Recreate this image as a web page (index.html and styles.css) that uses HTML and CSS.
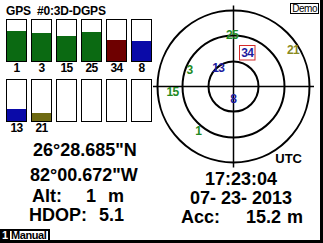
FILE: index.html
```html
<!DOCTYPE html>
<html>
<head>
<meta charset="utf-8">
<link rel="stylesheet" href="styles.css">
</head>
<body>
<div class="screen">
  <div class="left">
    <div class="title">GPS&nbsp;&nbsp;#0:3D-DGPS</div>
    <div class="bars">
      <div class="sat"><div class="bar"><div class="fill green" style="height:30px"></div></div><div class="lbl">1</div></div>
      <div class="sat"><div class="bar"><div class="fill green" style="height:28px"></div></div><div class="lbl">3</div></div>
      <div class="sat"><div class="bar"><div class="fill green" style="height:25px"></div></div><div class="lbl">15</div></div>
      <div class="sat"><div class="bar"><div class="fill green" style="height:29px"></div></div><div class="lbl">25</div></div>
      <div class="sat"><div class="bar"><div class="fill red" style="height:21px"></div></div><div class="lbl">34</div></div>
      <div class="sat"><div class="bar"><div class="fill blue" style="height:20px"></div></div><div class="lbl">8</div></div>
      <div class="sat"><div class="bar"><div class="fill blue" style="height:12px"></div></div><div class="lbl">13</div></div>
      <div class="sat"><div class="bar"><div class="fill olive" style="height:8px"></div></div><div class="lbl">21</div></div>
      <div class="sat"><div class="bar"></div><div class="lbl"></div></div>
      <div class="sat"><div class="bar"></div><div class="lbl"></div></div>
      <div class="sat"><div class="bar"></div><div class="lbl"></div></div>
      <div class="sat"><div class="bar"></div><div class="lbl"></div></div>
    </div>
    <div class="pos">
      <div class="lat">26°28.685"N</div>
      <div class="lon">82°00.672"W</div>
      <div class="alt"><span class="k-alt">Alt:</span><span>1</span><span class="u-alt">m</span></div>
      <div class="hdop"><span class="k-hdop">HDOP:</span><span>5.1</span></div>
    </div>
  </div>
  <div class="right">
    <svg class="radar" viewBox="0 0 167 151" width="167" height="151">
      <g fill="none" stroke="#000" stroke-width="2">
        <circle cx="80.5" cy="86.5" r="25"/>
        <circle cx="80.5" cy="86.5" r="51"/>
        <circle cx="80.5" cy="86.5" r="76"/>
      </g>
      <g stroke="#000" stroke-width="1.5">
        <line x1="0" y1="86.5" x2="161" y2="86.5"/>
        <line x1="80.5" y1="5.5" x2="80.5" y2="167.5"/>
      </g>
      <rect x="86.5" y="45.5" width="15.5" height="14.5" fill="#fff" stroke="#d42a2a" stroke-width="1"/>
      <g class="sv" text-anchor="middle">
        <text x="79" y="39" class="sv-g">25</text>
        <text x="94.3" y="57" class="sv-b">34</text>
        <text x="140" y="54" class="sv-o">21</text>
        <text x="36.5" y="74" class="sv-g">3</text>
        <text x="65.3" y="71.7" class="sv-b">13</text>
        <text x="19.5" y="95.7" class="sv-g">15</text>
        <text x="80.3" y="103.3" class="sv-b">8</text>
        <text x="45.3" y="135" class="sv-g">1</text>
      </g>
    </svg>
    <div class="utc">UTC</div>
    <div class="time">17:23:04</div>
    <div class="date">07- 23- 2013</div>
    <div class="acc"><span>Acc:</span><span class="acc-v">15.2</span><span class="acc-u">m</span></div>
  </div>
  <div class="footer"><div class="tab"><span class="num">1</span><span class="mode">Manual</span></div></div>
  <div class="demo">Demo</div>
</div>
</body>
</html>
```
FILE: styles.css
```css
html, body {
  margin: 0;
  padding: 0;
  background: #fff;
}
.screen {
  position: relative;
  width: 323px;
  height: 243px;
  box-sizing: border-box;
  border-right: 3px solid #000;
  border-bottom: 3px solid #000;
  background: #fff;
  display: grid;
  grid-template-columns: 153px 167px;
  grid-template-rows: 229px 11px;
  font-family: "Liberation Sans", Arial, sans-serif;
  color: #000;
  overflow: hidden;
}
.left {
  display: flex;
  flex-direction: column;
}
.title {
  padding: 5px 0 0 6px;
  height: 13px;
  line-height: 13px;
  font-family: "Liberation Sans Narrow", "Liberation Sans", sans-serif;
  font-weight: bold;
  font-size: 12px;
  letter-spacing: -0.2px;
  white-space: nowrap;
}
.bars {
  margin-top: 1px;
  padding-left: 6px;
  display: grid;
  grid-template-columns: repeat(6, 21px);
  column-gap: 4px;
}
.bar {
  height: 43px;
  box-sizing: border-box;
  border: 1px solid #000;
  display: flex;
  flex-direction: column;
  justify-content: flex-end;
}
.fill.green { background: #0b6a12; }
.fill.red { background: #6e0000; }
.fill.blue { background: #0a0aa8; }
.fill.olive { background: #6e6a12; }
.lbl {
  height: 17px;
  line-height: 12px;
  text-align: center;
  font-family: "Liberation Sans Narrow", "Liberation Sans", sans-serif;
  font-weight: bold;
  font-size: 12px;
  letter-spacing: -0.6px;
}
.pos {
  margin-top: 2px;
  font-weight: bold;
  font-size: 18px;
  line-height: 19px;
  white-space: nowrap;
}
.lat { padding-left: 33px; }
.lon { padding-left: 30px; margin-top: 6px; }
.alt { display: flex; padding-left: 32px; margin-top: 2px; }
.k-alt { width: 54px; }
.u-alt { margin-left: 12px; }
.hdop { display: flex; padding-left: 29px; }
.k-hdop { width: 70px; }
.right {
  display: flex;
  flex-direction: column;
}
.radar {
  display: block;
  overflow: visible;
}
.sv {
  font-family: "Liberation Sans Narrow", "Liberation Sans", sans-serif;
  font-weight: bold;
  font-size: 12px;
  letter-spacing: -0.6px;
}
.sv-g { fill: #238a23; }
.sv-b { fill: #1c1ca0; }
.sv-o { fill: #8a8a1e; }
.utc {
  font-weight: bold;
  font-size: 13px;
  line-height: 16px;
  text-align: right;
  padding-right: 18px;
}
.time, .date, .acc {
  font-weight: bold;
  font-size: 18px;
  line-height: 19px;
  white-space: pre;
}
.time { margin-top: 3px; text-align: center; padding-left: 9px; }
.date { text-align: center; padding-left: 9px; }
.acc { display: flex; padding-left: 28px; }
.acc-v { margin-left: 26px; }
.acc-u { margin-left: 6px; }
.footer {
  grid-column: 1 / -1;
  display: flex;
}
.tab {
  display: flex;
  background: #000;
  height: 11px;
  box-sizing: border-box;
  padding: 2px 2px 0 2px;
}
.num {
  color: #fff;
  width: 8px;
  font-family: "Liberation Sans Narrow", "Liberation Sans", sans-serif;
  font-weight: bold;
  font-size: 11px;
  line-height: 9px;
}
.mode {
  background: #fff;
  color: #000;
  padding: 0 1px;
  font-family: "Liberation Sans Narrow", "Liberation Sans", sans-serif;
  font-weight: bold;
  font-size: 11px;
  letter-spacing: -0.4px;
  line-height: 9px;
}
.demo {
  position: absolute;
  top: 3px;
  right: 1px;
  border: 1px solid #000;
  padding: 0 1px;
  font-family: "Liberation Sans Narrow", "Liberation Sans", sans-serif;
  font-size: 10px;
  letter-spacing: -0.5px;
  line-height: 9px;
}
```
